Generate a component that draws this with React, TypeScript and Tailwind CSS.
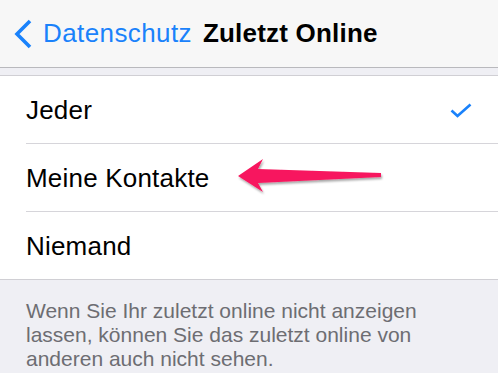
import React from "react";

export default function App() {
  const font = { fontFamily: '"Liberation Sans", Arial, sans-serif' };
  return (
    <div className="w-[498px] h-[373px] overflow-hidden bg-[#efeff4]" style={font}>
      <div className="h-[68px] bg-[#f7f7f7] border-b border-[#b9b9bd] flex items-center">
        <svg className="ml-[13px] w-[20px] h-[30px]" viewBox="0 0 20 30">
          <path d="M17 2 L4 15 L17 28" fill="none" stroke="#1a82fb" strokeWidth="3.6" strokeLinecap="butt" />
        </svg>
        <span className="ml-[10px] text-[26px] text-[#1a82fb] tracking-[0.4px]">Datenschutz</span>
        <span className="ml-[11px] text-[26px] font-bold text-black tracking-[0.2px]">Zuletzt Online</span>
      </div>
      <div className="h-[7px]" />
      <div className="relative bg-white border-t border-b border-[#d0cfd4]">
        <div className="h-[67px] flex items-center pl-[26px] pr-[26px] pt-[2px] text-[26px] tracking-[0.2px] text-black">
          <span className="flex-1">Jeder</span>
          <svg className="w-[22px] h-[15px]" viewBox="0 0 22 15">
            <path d="M1.5 7.5 L7.5 13 L20.5 1.5" fill="none" stroke="#1a82fb" strokeWidth="2.6" />
          </svg>
        </div>
        <div className="ml-[26px] h-px bg-[#d6d5da]" />
        <div className="h-[67px] flex items-center pl-[26px] pt-[2px] text-[26px] tracking-[0.2px] text-black">Meine Kontakte</div>
        <div className="ml-[26px] h-px bg-[#d6d5da]" />
        <div className="h-[67px] flex items-center pl-[26px] pt-[2px] text-[26px] tracking-[0.2px] text-black">Niemand</div>
        <svg className="absolute left-0 top-0 w-[498px] h-[210px] pointer-events-none" viewBox="0 0 498 210">
          <defs>
            <filter id="sh" x="-10%" y="-50%" width="120%" height="200%">
              <feDropShadow dx="1" dy="2" stdDeviation="1.2" floodColor="#000" floodOpacity="0.35" />
            </filter>
          </defs>
          <polygon
            points="238,100 263,83 258,93 381,97 381,101 258,107 263,116"
            fill="#f7195e"
            filter="url(#sh)"
          />
        </svg>
      </div>
      <div className="pt-[19px] pl-[26px] pr-[10px] text-[21px] leading-[24px] text-[#6d6d72]">
        Wenn Sie Ihr zuletzt online nicht anzeigen
        <br />
        lassen, können Sie das zuletzt online von
        <br />
        anderen auch nicht sehen.
      </div>
    </div>
  );
}
